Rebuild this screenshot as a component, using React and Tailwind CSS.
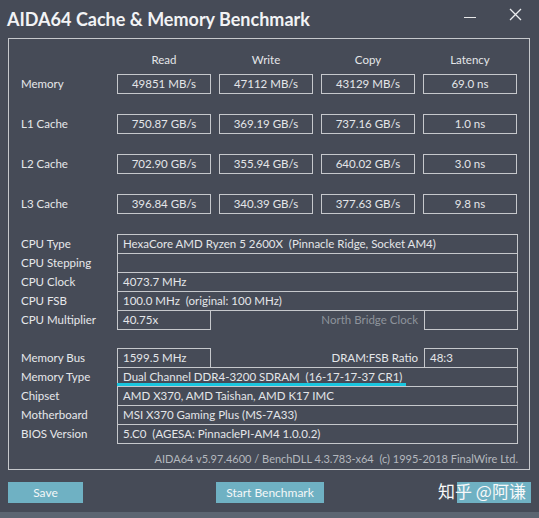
import React from 'react';

const FONT = { fontFamily: '"Lato", "Noto Sans", "Noto Sans CJK SC", sans-serif' };

const BENCH = [
  { label: 'Memory', values: ['49851 MB/s', '47112 MB/s', '43129 MB/s', '69.0 ns'] },
  { label: 'L1 Cache', values: ['750.87 GB/s', '369.19 GB/s', '737.16 GB/s', '1.0 ns'] },
  { label: 'L2 Cache', values: ['702.90 GB/s', '355.94 GB/s', '640.02 GB/s', '3.0 ns'] },
  { label: 'L3 Cache', values: ['396.84 GB/s', '340.39 GB/s', '377.63 GB/s', '9.8 ns'] },
];

// Single bordered value box used by the benchmark grid
const Cell = ({ children }) => (
  <div className="w-[94px] h-[20px] border border-[#c6c8cc] flex items-center justify-center text-[#e4e6e9]">
    {children}
  </div>
);

// Label + full-width box, stacked rows share a border
const InfoRow = ({ label, value, underline }) => (
  <div className="flex items-center h-[20px] -mt-px first:mt-0">
    <div className="w-[96px] text-[#e6e8eb]">{label}</div>
    <div className="relative flex-1 h-full border border-[#c6c8cc] px-[5px] flex items-center text-[#e4e6e9] whitespace-pre">
      {value}
      {underline && <span className="absolute left-[-1px] top-[15px] w-[289px] h-[3px] bg-[#19c6df]"></span>}
    </div>
  </div>
);

// Row with a short box on the left, a caption and a short box on the right
const SplitRow = ({ label, left, caption, right, dim }) => (
  <div className="flex items-center h-[20px] -mt-px first:mt-0">
    <div className="w-[96px] text-[#e6e8eb]">{label}</div>
    <div className="w-[94px] h-full border border-[#c6c8cc] px-[5px] flex items-center text-[#e4e6e9]">{left}</div>
    <div className={`flex-1 text-right pr-[6px] ${dim ? 'text-[#8e949c]' : 'text-[#e4e6e9]'}`}>{caption}</div>
    <div className="w-[94px] h-full border border-[#c6c8cc] px-[5px] flex items-center text-[#e4e6e9]">{right}</div>
  </div>
);

export default function App() {
  return (
    <div className="w-[539px] h-[518px] bg-[#464b57] flex flex-col text-[11.5px] leading-none overflow-hidden" style={FONT}>
      {/* title bar */}
      <div className="h-[38px] flex items-center pl-[7px] pr-[17px]">
        <div className="text-[18px] font-bold text-[#f2f3f5]">AIDA64 Cache &amp; Memory Benchmark</div>
        <div className="ml-auto flex items-center gap-[33px]">
          <span className="w-[12px] h-px bg-[#e8e8e8] mt-[-4px]"></span>
          <svg width="13" height="13" viewBox="0 0 13 13" className="mt-[-9px]">
            <path d="M1 1 L12 12 M12 1 L1 12" stroke="#eceef0" strokeWidth="1.3" />
          </svg>
        </div>
      </div>

      {/* main panel */}
      <div className="ml-[8px] w-[522px] h-[432px] border border-[#c6c8cc] pl-[12px] pr-[11px] pt-[11px] flex flex-col">
        <div className="flex h-[20px] items-center">
          <div className="w-[96px]"></div>
          <div className="flex gap-[8px] text-[#e4e6e9]">
            <div className="w-[94px] text-center">Read</div>
            <div className="w-[94px] text-center">Write</div>
            <div className="w-[94px] text-center">Copy</div>
            <div className="w-[94px] text-center">Latency</div>
          </div>
        </div>

        <div className="flex flex-col gap-[20px] mt-[4px]">
          {BENCH.map((row) => (
            <div key={row.label} className="flex items-center h-[20px]">
              <div className="w-[96px] text-[#e6e8eb]">{row.label}</div>
              <div className="flex gap-[8px]">
                {row.values.map((v, i) => (
                  <Cell key={i}>{v}</Cell>
                ))}
              </div>
            </div>
          ))}
        </div>

        <div className="flex flex-col mt-[20px]">
          <InfoRow label="CPU Type" value="HexaCore AMD Ryzen 5 2600X  (Pinnacle Ridge, Socket AM4)" />
          <InfoRow label="CPU Stepping" value="" />
          <InfoRow label="CPU Clock" value="4073.7 MHz" />
          <InfoRow label="CPU FSB" value="100.0 MHz  (original: 100 MHz)" />
          <SplitRow label="CPU Multiplier" left="40.75x" caption="North Bridge Clock" right="" dim />
        </div>

        <div className="flex flex-col mt-[18px]">
          <SplitRow label="Memory Bus" left="1599.5 MHz" caption="DRAM:FSB Ratio" right="48:3" />
          <InfoRow label="Memory Type" value="Dual Channel DDR4-3200 SDRAM  (16-17-17-37 CR1)" underline />
          <InfoRow label="Chipset" value="AMD X370, AMD Taishan, AMD K17 IMC" />
          <InfoRow label="Motherboard" value="MSI X370 Gaming Plus (MS-7A33)" />
          <InfoRow label="BIOS Version" value="5.C0  (AGESA: PinnaclePI-AM4 1.0.0.2)" />
        </div>

        <div className="mt-auto mb-[5px] text-right text-[11px] text-[#b4b8be] whitespace-pre">
          AIDA64 v5.97.4600 / BenchDLL 4.3.783-x64  (c) 1995-2018 FinalWire Ltd.
        </div>
      </div>

      {/* buttons */}
      <div className="relative flex items-center h-[21px] mt-[12px] pl-[8px]">
        <button className="w-[75px] h-full bg-[#6fb1c3] text-[#f4f7f8] text-[12px]">Save</button>
        <button className="ml-[133px] w-[108px] h-full bg-[#6fb1c3] text-[#f4f7f8] text-[12px]">Start Benchmark</button>
        <div className="ml-auto mr-[8px] w-[74px] h-full bg-[#6fb1c3]"></div>
        <span className="absolute left-[438px] top-[0px] text-[17px] text-[#f7f8f9] whitespace-pre" style={{ fontFamily: '"Noto Sans CJK SC", sans-serif' }}>
          知乎 @阿谦
        </span>
      </div>

      <div className="mt-auto h-[6px] bg-[#5c6571]"></div>
    </div>
  );
}
